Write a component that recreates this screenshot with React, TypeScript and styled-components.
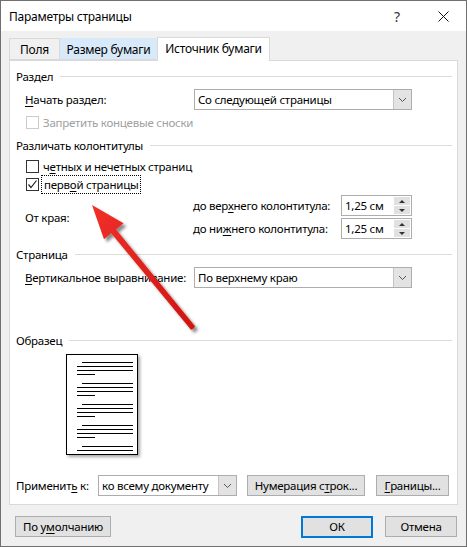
import React from 'react';
import styled, { createGlobalStyle } from 'styled-components';

const Global = createGlobalStyle`
  html, body { margin: 0; padding: 0; background: #fff; }
  body {
    font-family: "Noto Sans", "Open Sans", sans-serif;
    font-size: 11.5px;
    letter-spacing: -0.25px;
    color: #000;
    white-space: nowrap;
  }
  * { box-sizing: border-box; }
`;

const Window = styled.div`
  position: relative;
  width: 467px;
  height: 547px;
  border: 1px solid #707070;
  background: #f0f0f0;
  display: flex;
  flex-direction: column;
`;

const TitleBar = styled.div`
  height: 30px;
  background: #fff;
  display: flex;
  align-items: center;
  padding-left: 8px;
`;

const Title = styled.div`
  flex: 1;
  font-size: 12px;
`;

const TitleButton = styled.div`
  width: 46px;
  height: 30px;
  display: flex;
  align-items: center;
  justify-content: center;
  font-size: 14px;
  color: #333;
`;

const Body = styled.div`
  flex: 1;
  display: flex;
  flex-direction: column;
  padding: 7px 8px 0 8px;
`;

const Tabs = styled.div`
  display: flex;
  align-items: flex-end;
  height: 22px;
  position: relative;
  z-index: 1;
`;

const Tab = styled.div<{ $active?: boolean; $hover?: boolean; $w: number }>`
  width: ${p => p.$w}px;
  height: ${p => (p.$active ? 24 : 22)}px;
  margin-bottom: ${p => (p.$active ? -1 : 0)}px;
  display: flex;
  align-items: center;
  justify-content: center;
  font-size: 12px;
  background: ${p => (p.$active ? '#fff' : p.$hover ? '#d8eaf9' : '#f0f0f0')};
  border: 1px solid ${p => (p.$hover ? '#d8eaf9' : '#d9d9d9')};
  border-bottom: ${p => (p.$active ? 'none' : '1px solid #d9d9d9')};
  padding-bottom: ${p => (p.$active ? 2 : 0)}px;
`;

const Panel = styled.div`
  height: 445px;
  background: #fff;
  border: 1px solid #d9d9d9;
  padding: 7px 5px 0 6px;
  display: flex;
  flex-direction: column;
`;

const GroupHead = styled.div<{ $gap?: number }>`
  display: flex;
  align-items: center;
  height: 16px;
  margin-top: ${p => p.$gap ?? 0}px;
  &::after {
    content: '';
    flex: 1;
    height: 1px;
    background: #dcdcdc;
    margin-left: 7px;
  }
`;

const Row = styled.div<{ $gap?: number }>`
  display: flex;
  align-items: center;
  height: 21px;
  margin-top: ${p => p.$gap ?? 0}px;
  padding-left: 9px;
`;

const Label = styled.div<{ $w?: number }>`
  width: ${p => (p.$w ? `${p.$w}px` : 'auto')};
  flex: none;
`;

const Combo = styled.div<{ $w: number }>`
  width: ${p => p.$w}px;
  height: 21px;
  border: 1px solid #adadad;
  background: #fff;
  display: flex;
  align-items: stretch;
`;

const ComboText = styled.div`
  flex: 1;
  padding-left: 3px;
  display: flex;
  align-items: center;
`;

const ComboButton = styled.div`
  width: 18px;
  background: #e3e3e3;
  border-left: 1px solid #c4c4c4;
  display: flex;
  align-items: center;
  justify-content: center;
`;

const CheckRow = styled.div<{ $gap?: number; $disabled?: boolean }>`
  display: flex;
  align-items: center;
  height: 18px;
  margin-top: ${p => p.$gap ?? 0}px;
  padding-left: 10px;
  color: ${p => (p.$disabled ? '#a0a0a0' : '#000')};
`;

const Box = styled.div<{ $disabled?: boolean }>`
  width: 13px;
  height: 13px;
  border: 1px solid ${p => (p.$disabled ? '#cccccc' : '#333')};
  background: #fff;
  margin-right: 4px;
  display: flex;
  align-items: center;
  justify-content: center;
`;

const Focus = styled.span`
  outline: 1px dotted #000;
  outline-offset: 1px;
  padding: 0 1px;
`;

const MarginGrid = styled.div`
  display: grid;
  grid-template-columns: 168px 148px 71px;
  grid-template-rows: 21px 21px;
  row-gap: 2px;
  align-items: center;
  margin-top: 2px;
  padding-left: 9px;
`;

const SpanLabel = styled.div`
  grid-row: 1 / span 2;
  padding-top: 1px;
`;

const Spin = styled.div`
  width: 71px;
  height: 21px;
  border: 1px solid #adadad;
  display: flex;
  align-items: stretch;
`;

const SpinText = styled.div`
  flex: 1;
  padding-left: 3px;
  display: flex;
  align-items: center;
`;

const SpinButtons = styled.div`
  width: 16px;
  margin: 1px;
  display: flex;
  flex-direction: column;
  gap: 1px;
`;

const SpinHalf = styled.div<{ $up?: boolean }>`
  flex: 1;
  background: #e1e1e1;
  display: flex;
  align-items: center;
  justify-content: center;
  &::before {
    content: '';
    border-left: 3px solid transparent;
    border-right: 3px solid transparent;
    ${p => (p.$up ? 'border-bottom: 3px solid #333;' : 'border-top: 3px solid #333;')}
  }
`;

const Page = styled.div`
  width: 72px;
  height: 101px;
  margin: 6px 0 0 50px;
  border: 1px solid #000;
  background: #fff;
  box-shadow: 2px 2px 3px rgba(0, 0, 0, 0.35);
  padding: 7px 4px 0 10px;
  display: flex;
  flex-direction: column;
  gap: 8px;
`;

const Para = styled.div`
  display: flex;
  flex-direction: column;
  gap: 3px;
`;

const Line = styled.div<{ $kind: 'first' | 'full' | 'last' }>`
  height: 1px;
  background: #000;
  margin-left: ${p => (p.$kind === 'first' ? 5 : 0)}px;
  width: ${p => (p.$kind === 'last' ? '18px' : 'auto')};
`;

const ApplyRow = styled.div`
  display: flex;
  align-items: center;
  height: 21px;
  margin-top: 20px;
`;

const Button = styled.div<{ $w: number; $default?: boolean }>`
  width: ${p => p.$w}px;
  height: ${p => (p.$default ? 22 : 21)}px;
  background: #e1e1e1;
  border: ${p => (p.$default ? '2px solid #0078d7' : '1px solid #adadad')};
  display: flex;
  align-items: center;
  justify-content: center;
`;

const Footer = styled.div`
  display: flex;
  align-items: center;
  margin-top: 10px;
  padding-left: 6px;
  height: 23px;
  gap: 12px;
`;

const Spacer = styled.div`
  flex: 1;
`;

const U = styled.span`
  text-decoration: underline;
  text-underline-offset: 2px;
`;

const ArrowLayer = styled.svg`
  position: absolute;
  left: -1px;
  top: -1px;
  pointer-events: none;
`;

const Chevron = () => (
  <svg width="9" height="6" viewBox="0 0 9 6">
    <polyline points="1,1 4.5,4.5 8,1" fill="none" stroke="#555" strokeWidth="1" />
  </svg>
);

const Check = () => (
  <svg width="11" height="11" viewBox="0 0 11 11">
    <polyline points="1.5,5.5 4,8.5 9.5,1.5" fill="none" stroke="#222" strokeWidth="1.2" />
  </svg>
);

const Close = () => (
  <svg width="11" height="11" viewBox="0 0 11 11">
    <line x1="0.5" y1="0.5" x2="10.5" y2="10.5" stroke="#111" strokeWidth="1" />
    <line x1="10.5" y1="0.5" x2="0.5" y2="10.5" stroke="#111" strokeWidth="1" />
  </svg>
);

const paras = [4, 4, 4, 4];

export default function App() {
  return (
    <>
      <Global />
      <Window>
        <TitleBar>
          <Title>Параметры страницы</Title>
          <TitleButton>?</TitleButton>
          <TitleButton><Close /></TitleButton>
        </TitleBar>
        <Body>
          <Tabs>
            <Tab $w={51}>Поля</Tab>
            <Tab $w={97} $hover>Размер бумаги</Tab>
            <Tab $w={113} $active>Источник бумаги</Tab>
          </Tabs>
          <Panel>
            <GroupHead>Раздел</GroupHead>
            <Row $gap={5}>
              <Label $w={169}><U>Н</U>ачать раздел:</Label>
              <Combo $w={218}>
                <ComboText>Со следующей страницы</ComboText>
                <ComboButton><Chevron /></ComboButton>
              </Combo>
            </Row>
            <CheckRow $gap={3} $disabled>
              <Box $disabled />
              Запретить концевые сноски
            </CheckRow>

            <GroupHead $gap={6}>Различать колонтитулы</GroupHead>
            <CheckRow $gap={4}>
              <Box />
              ч<U>е</U>тных и нечетных страниц
            </CheckRow>
            <CheckRow>
              <Box><Check /></Box>
              <Focus>перв<U>о</U>й страницы</Focus>
            </CheckRow>
            <MarginGrid>
              <SpanLabel>От края:</SpanLabel>
              <div>до вер<U>х</U>него колонтитула:</div>
              <Spin>
                <SpinText>1,25 см</SpinText>
                <SpinButtons><SpinHalf $up /><SpinHalf /></SpinButtons>
              </Spin>
              <div>до ни<U>ж</U>него колонтитула:</div>
              <Spin>
                <SpinText>1,25 см</SpinText>
                <SpinButtons><SpinHalf $up /><SpinHalf /></SpinButtons>
              </Spin>
            </MarginGrid>

            <GroupHead $gap={7}>Страница</GroupHead>
            <Row $gap={5}>
              <Label $w={169}><U>В</U>ертикальное выравнивание:</Label>
              <Combo $w={218}>
                <ComboText>По верхнему краю</ComboText>
                <ComboButton><Chevron /></ComboButton>
              </Combo>
            </Row>

            <GroupHead $gap={44}>Образец</GroupHead>
            <Page>
              {paras.map((_, i) => (
                <Para key={i}>
                  <Line $kind="first" />
                  <Line $kind="full" />
                  <Line $kind="full" />
                  <Line $kind="last" />
                </Para>
              ))}
              <Para>
                <Line $kind="first" />
                <Line $kind="full" />
              </Para>
            </Page>

            <ApplyRow>
              <Label $w={82}>Применит<U>ь</U> к:</Label>
              <Combo $w={139}>
                <ComboText>ко всему документу</ComboText>
                <ComboButton><Chevron /></ComboButton>
              </Combo>
              <Button $w={118} style={{ marginLeft: 10 }}>Нумерация с<U>т</U>рок...</Button>
              <Button $w={73} style={{ marginLeft: 11 }}><U>Г</U>раницы...</Button>
            </ApplyRow>
          </Panel>
          <Footer>
            <Button $w={96}>По у<U>м</U>олчанию</Button>
            <Spacer />
            <Button $w={72} $default>ОК</Button>
            <Button $w={72} style={{ marginRight: 1 }}>Отмена</Button>
          </Footer>
        </Body>
        <ArrowLayer width="467" height="547" viewBox="0 0 467 547">
          <defs>
            <linearGradient id="red" x1="0" y1="0" x2="1" y2="1">
              <stop offset="0" stopColor="#f0302a" />
              <stop offset="1" stopColor="#d0140f" />
            </linearGradient>
            <filter id="shadow" x="-20%" y="-20%" width="150%" height="150%">
              <feDropShadow dx="3" dy="3" stdDeviation="1.8" floodColor="#000" floodOpacity="0.45" />
            </filter>
          </defs>
          <polygon
            points="92,205 123.5,223.3 116,229.4 195,326.2 193.5,328.6 191,329.8 111.2,233.2 104,239.3"
            fill="url(#red)"
            filter="url(#shadow)"
          />
        </ArrowLayer>
      </Window>
    </>
  );
}
